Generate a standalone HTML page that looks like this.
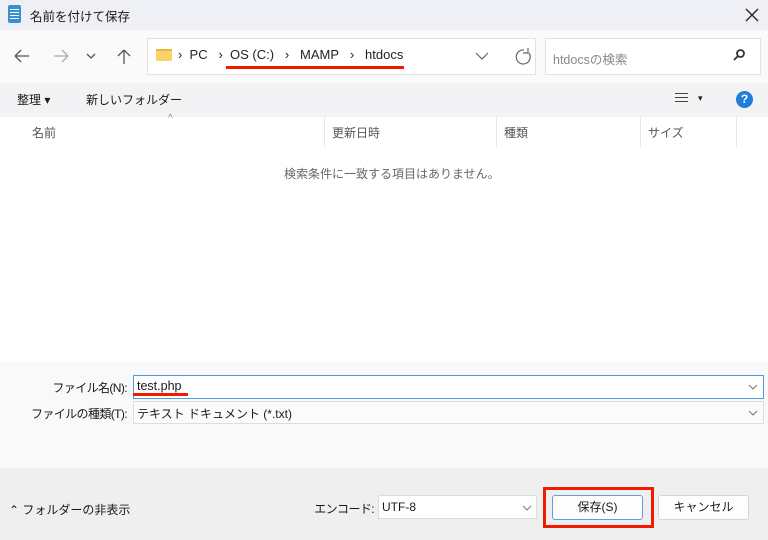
<!DOCTYPE html><html><head><meta charset="utf-8"><style>
*{margin:0;padding:0;box-sizing:border-box}
body{width:768px;height:540px;overflow:hidden;background:#fff;font-family:"Liberation Sans","Noto Sans CJK JP",sans-serif;font-size:12px;color:#1a1a1a;position:relative}
.a{position:absolute;white-space:nowrap}
</style></head><body>
<div class="a" style="left:0;top:0;width:768px;height:30px;background:#eff0f6"></div>
<div class="a" style="left:8px;top:5px;width:13px;height:18px;background:#3a8fd0;border-radius:2px"></div>
<div class="a" style="left:10px;top:9px;width:9px;height:1px;background:#fff;box-shadow:0 3px #fff,0 6px #fff,0 9px #fff"></div>
<div class="a" style="left:30px;top:6px;font-size:12.5px">名前を付けて保存</div>
<svg class="a" style="left:745px;top:8px" width="14" height="14" stroke="#222" stroke-width="1.3"><path d="M1 1l12 12M13 1L1 13"/></svg>
<div class="a" style="left:0;top:30px;width:768px;height:53px;background:#fafafa"></div>
<svg class="a" style="left:12px;top:46px" width="130" height="20" fill="none" stroke="#555" stroke-width="1.3">
<path d="M3 10h14M3 10l6-6M3 10l6 6"/><path d="M42 10h14M56 10l-6-6M56 10l-6 6" stroke="#aaa"/>
<path d="M75 8l4 4 4-4"/><path d="M112 4v14M112 4l-6 6M112 4l6 6"/></svg>
<div class="a" style="left:147px;top:38px;width:389px;height:37px;background:#fff;border:1px solid #e2e2e2"></div>
<div class="a" style="left:156px;top:49px;width:16px;height:12px;background:#f8d26a;border-radius:1px;border-top:2px solid #e8b83c"></div>
<div class="a" style="left:178px;top:47px;font-size:13px;color:#222">›&nbsp;&nbsp;PC&nbsp;&nbsp;&nbsp;›&nbsp;&nbsp;OS (C:)&nbsp;&nbsp;&nbsp;›&nbsp;&nbsp;&nbsp;MAMP&nbsp;&nbsp;&nbsp;›&nbsp;&nbsp;&nbsp;htdocs</div>
<div class="a" style="left:226px;top:66px;width:178px;height:3px;background:#f21a00"></div>
<svg class="a" style="left:474px;top:46px" width="60" height="20" fill="none" stroke="#666" stroke-width="1.2"><path d="M2 7l6 6 6-6"/><path d="M50 4a7 7 0 1 0 5 3M54 2v5h-5"/></svg>
<div class="a" style="left:545px;top:38px;width:216px;height:37px;background:#fff;border:1px solid #e2e2e2"></div>
<div class="a" style="left:553px;top:49px;font-size:12.5px;color:#888">htdocsの検索</div>
<svg class="a" style="left:732px;top:48px" width="14" height="14" fill="none" stroke="#333" stroke-width="1.8"><circle cx="8.5" cy="5.5" r="3.5"/><path d="M6 8l-4 4"/></svg>
<div class="a" style="left:0;top:83px;width:768px;height:34px;background:#f3f3f5"></div>
<div class="a" style="left:17px;top:91px;font-size:12px">整理 ▾</div>
<div class="a" style="left:86px;top:91px;font-size:12px">新しいフォルダー</div>
<div class="a" style="left:675px;top:93px;width:13px;height:1px;background:#444;box-shadow:0 4px #444,0 8px #444"></div>
<div class="a" style="left:698px;top:93px;font-size:9px">▾</div>
<div class="a" style="left:736px;top:91px;width:17px;height:17px;border-radius:50%;background:#1f7fd8;color:#fff;font-size:12px;font-weight:bold;text-align:center;line-height:17px">?</div>
<div class="a" style="left:168px;top:113px;font-size:10px;color:#888">^</div>
<div class="a" style="left:32px;top:124px;color:#555">名前</div>
<div class="a" style="left:324px;top:117px;width:1px;height:30px;background:#e5e5e5"></div>
<div class="a" style="left:332px;top:124px;color:#555">更新日時</div>
<div class="a" style="left:496px;top:117px;width:1px;height:30px;background:#e5e5e5"></div>
<div class="a" style="left:504px;top:124px;color:#555">種類</div>
<div class="a" style="left:640px;top:117px;width:1px;height:30px;background:#e5e5e5"></div>
<div class="a" style="left:648px;top:124px;color:#555">サイズ</div>
<div class="a" style="left:736px;top:117px;width:1px;height:30px;background:#e5e5e5"></div>
<div class="a" style="left:284px;top:165px;color:#666">検索条件に一致する項目はありません。</div>
<div class="a" style="left:0;top:362px;width:768px;height:106px;background:#f9f9f9"></div>
<div class="a" style="right:641px;top:379px;letter-spacing:-0.6px">ファイル名(N):</div>
<div class="a" style="left:133px;top:375px;width:631px;height:24px;background:#fff;border:1px solid #4c9be0"></div>
<div class="a" style="left:137px;top:379px;font-size:12.5px">test.php</div>
<div class="a" style="left:133px;top:393px;width:55px;height:3px;background:#f21a00"></div>
<div class="a" style="right:641px;top:405px;letter-spacing:-0.6px">ファイルの種類(T):</div>
<div class="a" style="left:133px;top:401px;width:631px;height:23px;background:#fbfbfb;border:1px solid #ddd"></div>
<div class="a" style="left:137px;top:405px">テキスト ドキュメント (*.txt)</div>
<svg class="a" style="left:748px;top:383px" width="10" height="40" fill="none" stroke="#777"><path d="M1 2l4 4 4-4M1 28l4 4 4-4"/></svg>
<div class="a" style="left:0;top:468px;width:768px;height:72px;background:#efefef"></div>
<div class="a" style="left:9px;top:501px">⌃ フォルダーの非表示</div>
<div class="a" style="right:394px;top:500px;letter-spacing:-0.6px">エンコード:</div>
<div class="a" style="left:378px;top:495px;width:159px;height:24px;background:#fff;border:1px solid #ddd"></div>
<div class="a" style="left:382px;top:500px">UTF-8</div>
<svg class="a" style="left:522px;top:504px" width="10" height="8" fill="none" stroke="#777"><path d="M1 2l4 4 4-4"/></svg>
<div class="a" style="left:543px;top:487px;width:111px;height:41px;border:3px solid #f21a00"></div>
<div class="a" style="left:552px;top:495px;width:91px;height:25px;background:#fdfdfd;border:1px solid #5ea0dc;border-radius:3px;text-align:center;line-height:23px">保存(S)</div>
<div class="a" style="left:658px;top:495px;width:91px;height:25px;background:#fdfdfd;border:1px solid #d5d5d5;border-radius:3px;text-align:center;line-height:23px">キャンセル</div>
</body></html>
